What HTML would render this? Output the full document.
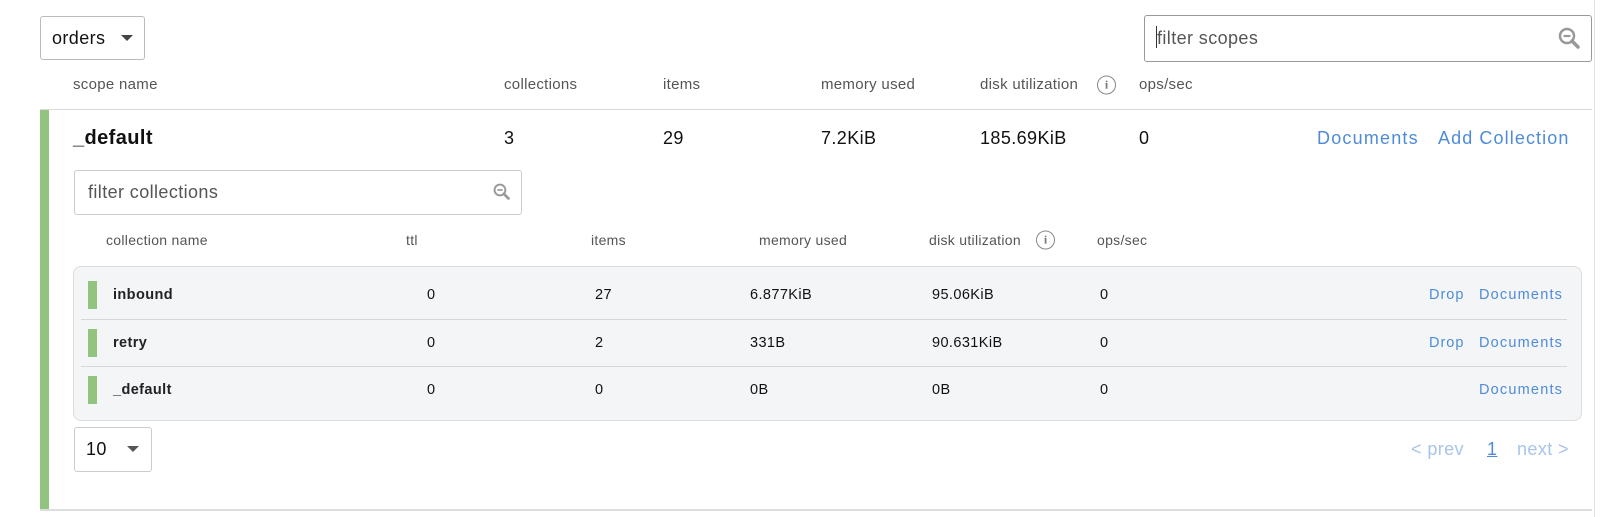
<!DOCTYPE html>
<html><head><meta charset="utf-8"><style>
body{margin:0;width:1600px;height:517px;background:#fff;position:relative;overflow:hidden;font-family:"Liberation Sans",sans-serif;color:#111}
.a{position:absolute;white-space:nowrap;line-height:20px}
.h{font-size:15px;color:#555;transform:translateY(-50%);letter-spacing:0.3px}
.s{font-size:18px;color:#111;transform:translateY(-50%);letter-spacing:0.4px}
.c{font-size:14.5px;color:#111;transform:translateY(-50%);letter-spacing:0.4px}
.l{color:#4f8bd8}
.box{position:absolute;border:1px solid #bbb;border-radius:3px;background:#fff}
.info{position:absolute;width:17px;height:17px;border:1.5px solid #888;border-radius:50%;font-size:12px;line-height:17px;text-align:center;color:#777;font-family:"Liberation Serif",serif;font-weight:bold;transform:translateY(-50%)}
.bar{position:absolute;width:9px;height:28px;background:#92c47f;left:88px}
</style></head><body>
<div class="a" style="left:1594px;top:0;width:1px;height:517px;background:#e2e2e2"></div>

<div class="box" style="left:40px;top:16px;width:103px;height:42px"></div>
<div class="a s" style="left:52px;top:38px;font-size:18px">orders</div>
<div class="a" style="left:121px;top:35px;width:0;height:0;border-left:6px solid transparent;border-right:6px solid transparent;border-top:6px solid #444"></div>

<div class="box" style="left:1144px;top:15px;width:446px;height:45px;border-color:#999"></div>
<div class="a" style="left:1156px;top:26px;width:1px;height:22px;background:#333"></div>
<div class="a s" style="left:1157px;top:38px;color:#555">filter scopes</div>
<svg class="a" style="left:1558px;top:27px" width="22" height="22" viewBox="0 0 22 22"><circle cx="9" cy="9" r="7" fill="none" stroke="#999" stroke-width="2.5"/><line x1="5.5" y1="9" x2="12.5" y2="9" stroke="#999" stroke-width="2.2"/><line x1="14" y1="14" x2="20" y2="20" stroke="#999" stroke-width="3.5" stroke-linecap="round"/></svg>

<div class="a h" style="left:73px;top:85px">scope name</div>
<div class="a h" style="left:504px;top:85px">collections</div>
<div class="a h" style="left:663px;top:85px">items</div>
<div class="a h" style="left:821px;top:85px">memory used</div>
<div class="a h" style="left:980px;top:85px">disk utilization</div>
<div class="info" style="left:1097px;top:85px">i</div>
<div class="a h" style="left:1139px;top:85px">ops/sec</div>

<div class="a" style="left:40px;top:109px;width:1552px;height:1px;background:#d8d8d8"></div>
<div class="a" style="left:40px;top:110px;width:9px;height:400px;background:#92c47f"></div>
<div class="a" style="left:40px;top:509px;width:1552px;height:2px;background:#ddd"></div>

<div class="a s" style="left:73px;top:138px;font-size:20px;font-weight:bold">_default</div>
<div class="a s" style="left:504px;top:138px">3</div>
<div class="a s" style="left:663px;top:138px">29</div>
<div class="a s" style="left:821px;top:138px">7.2KiB</div>
<div class="a s" style="left:980px;top:138px">185.69KiB</div>
<div class="a s" style="left:1139px;top:138px">0</div>
<div class="a s l" style="left:1317px;top:138px;letter-spacing:1.2px">Documents</div>
<div class="a s l" style="left:1438px;top:138px;letter-spacing:1.1px">Add Collection</div>

<div class="box" style="left:74px;top:170px;width:446px;height:43px;border-color:#ccc"></div>
<div class="a s" style="left:88px;top:192px;color:#555">filter collections</div>
<svg class="a" style="left:493px;top:183px" width="17" height="17" viewBox="0 0 22 22"><circle cx="9" cy="9" r="7" fill="none" stroke="#999" stroke-width="2.5"/><line x1="5.5" y1="9" x2="12.5" y2="9" stroke="#999" stroke-width="2.2"/><line x1="14" y1="14" x2="20" y2="20" stroke="#999" stroke-width="3.5" stroke-linecap="round"/></svg>

<div class="a h" style="left:106px;top:240px;font-size:14px">collection name</div>
<div class="a h" style="left:406px;top:240px;font-size:14px">ttl</div>
<div class="a h" style="left:591px;top:240px;font-size:14px">items</div>
<div class="a h" style="left:759px;top:240px;font-size:14px">memory used</div>
<div class="a h" style="left:929px;top:240px;font-size:14px">disk utilization</div>
<div class="info" style="left:1036px;top:240px">i</div>
<div class="a h" style="left:1097px;top:240px;font-size:14px">ops/sec</div>

<div class="a" style="left:73px;top:266px;width:1507px;height:153px;background:#f4f5f7;border:1px solid #ddd;border-radius:8px"></div>
<div class="a" style="left:81px;top:319px;width:1486px;height:1px;background:#d6d6d6"></div>
<div class="a" style="left:81px;top:366px;width:1486px;height:1px;background:#d6d6d6"></div>

<div class="bar" style="top:281px"></div>
<div class="bar" style="top:329px"></div>
<div class="bar" style="top:376px"></div>

<div class="a c" style="left:113px;top:295px;font-weight:bold;color:#222">inbound</div>
<div class="a c" style="left:427px;top:295px">0</div>
<div class="a c" style="left:595px;top:295px">27</div>
<div class="a c" style="left:750px;top:295px">6.877KiB</div>
<div class="a c" style="left:932px;top:295px">95.06KiB</div>
<div class="a c" style="left:1100px;top:295px">0</div>
<div class="a c l" style="left:1429px;top:295px;letter-spacing:1px">Drop</div>
<div class="a c l" style="left:1479px;top:295px;letter-spacing:1.2px">Documents</div>

<div class="a c" style="left:113px;top:343px;font-weight:bold;color:#222">retry</div>
<div class="a c" style="left:427px;top:343px">0</div>
<div class="a c" style="left:595px;top:343px">2</div>
<div class="a c" style="left:750px;top:343px">331B</div>
<div class="a c" style="left:932px;top:343px">90.631KiB</div>
<div class="a c" style="left:1100px;top:343px">0</div>
<div class="a c l" style="left:1429px;top:343px;letter-spacing:1px">Drop</div>
<div class="a c l" style="left:1479px;top:343px;letter-spacing:1.2px">Documents</div>

<div class="a c" style="left:113px;top:390px;font-weight:bold;color:#222">_default</div>
<div class="a c" style="left:427px;top:390px">0</div>
<div class="a c" style="left:595px;top:390px">0</div>
<div class="a c" style="left:750px;top:390px">0B</div>
<div class="a c" style="left:932px;top:390px">0B</div>
<div class="a c" style="left:1100px;top:390px">0</div>
<div class="a c l" style="left:1479px;top:390px;letter-spacing:1.2px">Documents</div>

<div class="box" style="left:74px;top:427px;width:76px;height:43px;border-color:#ccc"></div>
<div class="a s" style="left:86px;top:449px">10</div>
<div class="a" style="left:127px;top:446px;width:0;height:0;border-left:6px solid transparent;border-right:6px solid transparent;border-top:6px solid #555"></div>

<div class="a s" style="left:1411px;top:449px;color:#a9c3ea">&lt; prev</div>
<div class="a s l" style="left:1487px;top:449px;text-decoration:underline">1</div>
<div class="a s" style="left:1517px;top:449px;color:#a9c3ea">next &gt;</div>
</body></html>
